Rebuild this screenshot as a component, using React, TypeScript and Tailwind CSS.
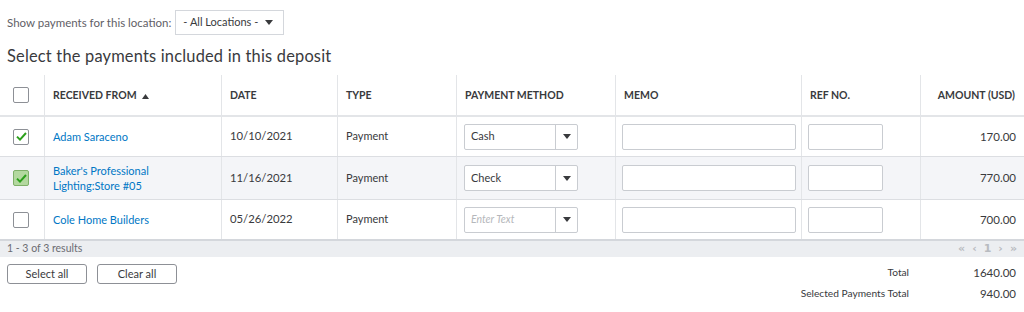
import { useState } from "react";

type Payment = {
  id: number;
  name: string[];
  date: string;
  type: string;
  method: string;
  amount: string;
  checked: boolean;
  h: string;
  bg: string;
};

const rows: Payment[] = [
  { id: 1, name: ["Adam Saraceno"], date: "10/10/2021", type: "Payment", method: "Cash", amount: "170.00", checked: true, h: "h-[40px]", bg: "bg-white" },
  { id: 2, name: ["Baker's Professional", "Lighting:Store #05"], date: "11/16/2021", type: "Payment", method: "Check", amount: "770.00", checked: true, h: "h-[43px]", bg: "bg-[#f4f5f8]" },
  { id: 3, name: ["Cole Home Builders"], date: "05/26/2022", type: "Payment", method: "", amount: "700.00", checked: false, h: "h-[39px]", bg: "bg-white" },
];

const cols = "grid grid-cols-[45px_177px_116px_119px_159px_186px_119px_1fr]";
const cell = "border-r border-[#e3e5e8] flex items-center";

function Caret() {
  return (
    <svg width="8" height="5" viewBox="0 0 8 5">
      <path d="M0 0h8L4 5z" fill="#393a3d" />
    </svg>
  );
}

function Check({ on, tint }: { on: boolean; tint?: boolean }) {
  return (
    <div
      className={`w-[16px] h-[16px] border rounded-[2px] flex items-center justify-center ${
        tint ? "border-[#7fb069] bg-[#b3d89f]" : "border-[#8d9096] bg-white"
      }`}
    >
      {on && (
        <svg width="11" height="9" viewBox="0 0 11 9">
          <path d="M1 4.6l3 3L10 1" fill="none" stroke="#2ca01c" strokeWidth="2" />
        </svg>
      )}
    </div>
  );
}

export default function App() {
  const [memo] = useState("");
  return (
    <div className="w-[1024px] h-[312px] bg-white text-[#393a3d] font-['Lato','Open_Sans',sans-serif] overflow-hidden">
      <div className="flex items-center gap-[4px] pl-[7px] pt-[10px]">
        <span className="text-[11.5px] text-[#5f6066]">Show payments for this location:</span>
        <div className="w-[109px] h-[25px] border border-[#d4d7dc] flex items-center justify-between pl-[7px] pr-[10px] text-[11px] text-[#393a3d]">
          <span>- All Locations -</span>
          <Caret />
        </div>
      </div>
      <h2 className="pl-[7px] mt-[11px] text-[16.4px] leading-[20px] text-[#393a3d] tracking-[0.2px]">
        Select the payments included in this deposit
      </h2>

      <div className="mt-[9px]">
        <div className={`${cols} h-[42px] border-b-2 border-[#e3e5e8] text-[10.5px] font-bold text-[#393a3d]`}>
          <div className={`${cell} pl-[13px]`}>
            <Check on={false} />
          </div>
          <div className={`${cell} pl-[8px] gap-[5px] pt-[2px]`}>
            RECEIVED FROM
            <svg width="7" height="5" viewBox="0 0 7 5">
              <path d="M0 5h7L3.5 0z" fill="#393a3d" />
            </svg>
          </div>
          <div className={`${cell} pl-[8px] pt-[2px]`}>DATE</div>
          <div className={`${cell} pl-[8px] pt-[2px]`}>TYPE</div>
          <div className={`${cell} pl-[8px] pt-[2px]`}>PAYMENT METHOD</div>
          <div className={`${cell} pl-[8px] pt-[2px]`}>MEMO</div>
          <div className={`${cell} pl-[8px] pt-[2px]`}>REF NO.</div>
          <div className="flex items-center justify-end pr-[9px] pt-[2px]">AMOUNT (USD)</div>
        </div>

        {rows.map((r, i) => (
          <div
            key={r.id}
            className={`${cols} ${r.h} ${r.bg} text-[11px] ${i < rows.length - 1 ? "border-b border-[#dcdee2]" : ""}`}
          >
            <div className={`${cell} pl-[13px]`}>
              <Check on={r.checked} tint={r.id === 2} />
            </div>
            <div className={`${cell} pl-[8px] text-[#0077c5] leading-[15px]`}>
              <div>
                {r.name.map((n) => (
                  <div key={n}>{n}</div>
                ))}
              </div>
            </div>
            <div className={`${cell} pl-[8px] text-[11.3px]`}>{r.date}</div>
            <div className={`${cell} pl-[8px]`}>{r.type}</div>
            <div className={`${cell} pl-[7px]`}>
              <div className="w-[114px] h-[26px] border border-[#c9ccd1] rounded-[2px] bg-white flex">
                <div className={`flex-1 flex items-center pl-[6px] ${r.method ? "" : "italic text-[#b5b7bb] text-[10.5px]"}`}>
                  {r.method || "Enter Text"}
                </div>
                <div className="w-[22px] border-l border-[#c9ccd1] flex items-center justify-center">
                  <Caret />
                </div>
              </div>
            </div>
            <div className={`${cell} pl-[6px]`}>
              <div className="w-[174px] h-[26px] border border-[#c9ccd1] rounded-[2px] bg-white">{memo}</div>
            </div>
            <div className={`${cell} pl-[6px]`}>
              <div className="w-[75px] h-[26px] border border-[#c9ccd1] rounded-[2px] bg-white" />
            </div>
            <div className="flex items-center justify-end pr-[8px] text-[11.5px]">{r.amount}</div>
          </div>
        ))}

        <div className="h-[18px] bg-[#eceef1] border-t-2 border-[#d4d7dc] flex items-center justify-between pl-[7px] pr-[7px] text-[10.5px] text-[#6b6c72]">
          <span>1 - 3 of 3 results</span>
          <span className="flex gap-[7px] text-[#b8bbc0] text-[11px] font-['DejaVu_Sans',sans-serif] font-bold">
            <span>«</span>
            <span>‹</span>
            <span>1</span>
            <span>›</span>
            <span>»</span>
          </span>
        </div>
      </div>

      <div className="flex justify-between pl-[7px] pr-[8px] mt-[7px]">
        <div className="flex gap-[10px]">
          <button className="w-[80px] h-[20px] border border-[#8d9096] rounded-[3px] text-[11px] text-[#393a3d] bg-white">
            Select all
          </button>
          <button className="w-[80px] h-[20px] border border-[#8d9096] rounded-[3px] text-[11px] text-[#393a3d] bg-white">
            Clear all
          </button>
        </div>
        <div className="grid grid-cols-[auto_107px] text-[11.5px] leading-[21px] text-right mt-[-2px]">
          <span className="text-[10.2px]">Total</span>
          <span>1640.00</span>
          <span className="text-[10.2px]">Selected Payments Total</span>
          <span>940.00</span>
        </div>
      </div>
    </div>
  );
}
